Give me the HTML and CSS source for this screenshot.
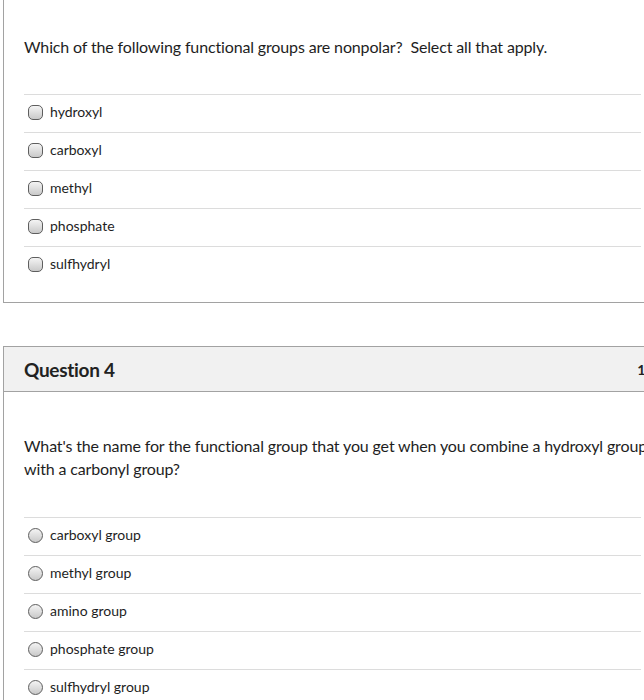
FILE: index.html
```html
<!DOCTYPE html>
<html>
<head>
<meta charset="utf-8">
<link rel="stylesheet" href="styles.css">
</head>
<body>
<div class="page">
  <section class="card card-first">
    <div class="question-text">Which of the following functional groups are nonpolar?&nbsp; Select all that apply.</div>
    <ul class="answers">
      <li class="answer"><span class="box"></span><span class="label">hydroxyl</span></li>
      <li class="answer"><span class="box"></span><span class="label">carboxyl</span></li>
      <li class="answer"><span class="box"></span><span class="label">methyl</span></li>
      <li class="answer"><span class="box"></span><span class="label">phosphate</span></li>
      <li class="answer"><span class="box"></span><span class="label">sulfhydryl</span></li>
    </ul>
  </section>

  <section class="card card-second">
    <header class="card-header">
      <span class="title">Question 4</span>
      <span class="points">1 pts</span>
    </header>
    <div class="question-text q2">What's the name for the functional group that you get when you combine a hydroxyl group with a carbonyl group?</div>
    <ul class="answers">
      <li class="answer"><span class="radio"></span><span class="label">carboxyl group</span></li>
      <li class="answer"><span class="radio"></span><span class="label">methyl group</span></li>
      <li class="answer"><span class="radio"></span><span class="label">amino group</span></li>
      <li class="answer"><span class="radio"></span><span class="label">phosphate group</span></li>
      <li class="answer"><span class="radio"></span><span class="label">sulfhydryl group</span></li>
    </ul>
  </section>
</div>
</body>
</html>
```

FILE: styles.css
```css
html, body {
  margin: 0;
  padding: 0;
  background: #ffffff;
  overflow: hidden;
}
body {
  font-family: Lato, "Open Sans", sans-serif;
  color: #1e1e1e;
}
.page {
  width: 644px;
  height: 700px;
  overflow: hidden;
  display: flex;
  flex-direction: column;
  padding-left: 3px;
  box-sizing: border-box;
}
.card {
  width: 700px;
  box-sizing: border-box;
  border: 1px solid #a2a2a2;
  flex-shrink: 0;
}
.card-first {
  border-top: none;
  padding: 35px 0 18px 20px;
}
.card-second {
  margin-top: 43px;
  border-bottom: none;
}
.question-text {
  font-size: 16px;
  line-height: 23px;
  width: 620px;
  letter-spacing: -0.14px;
}
.card-first .question-text {
  margin-bottom: 36px;
}
.card-header {
  background: #f1f1f1;
  border-bottom: 1px solid #a2a2a2;
  height: 44px;
  display: flex;
  align-items: center;
  justify-content: space-between;
  padding: 0 0 0 20px;
}
.title {
  font-weight: 700;
  font-size: 19px;
  letter-spacing: -0.3px;
  color: #222;
}
.points {
  font-weight: 700;
  font-size: 14px;
  margin-right: 34px;
  color: #222;
}
.q2 {
  padding: 42px 0 0 20px;
  margin-bottom: 37px;
  width: 660px;
  box-sizing: border-box;
}
.card-second .answers {
  margin-left: 20px;
}
.answers {
  list-style: none;
  margin: 0;
  padding: 0;
  width: 617px;
}
.answer {
  border-top: 1px solid #dcdcdc;
  height: 37px;
  box-sizing: content-box;
  display: flex;
  align-items: center;
  padding-left: 4px;
  padding-bottom: 0;
  gap: 7px;
  font-size: 14px;
}
.answer > * {
  margin-top: -3px;
}
.box, .radio {
  width: 13px;
  height: 13px;
  border: 1px solid #5e5e5e;
  background: linear-gradient(#f4f4f4, #c9c9c9);
  flex-shrink: 0;
}
.box {
  border-radius: 5px;
}
.radio {
  border-radius: 50%;
}
.label {
  line-height: 18px;
}
```
